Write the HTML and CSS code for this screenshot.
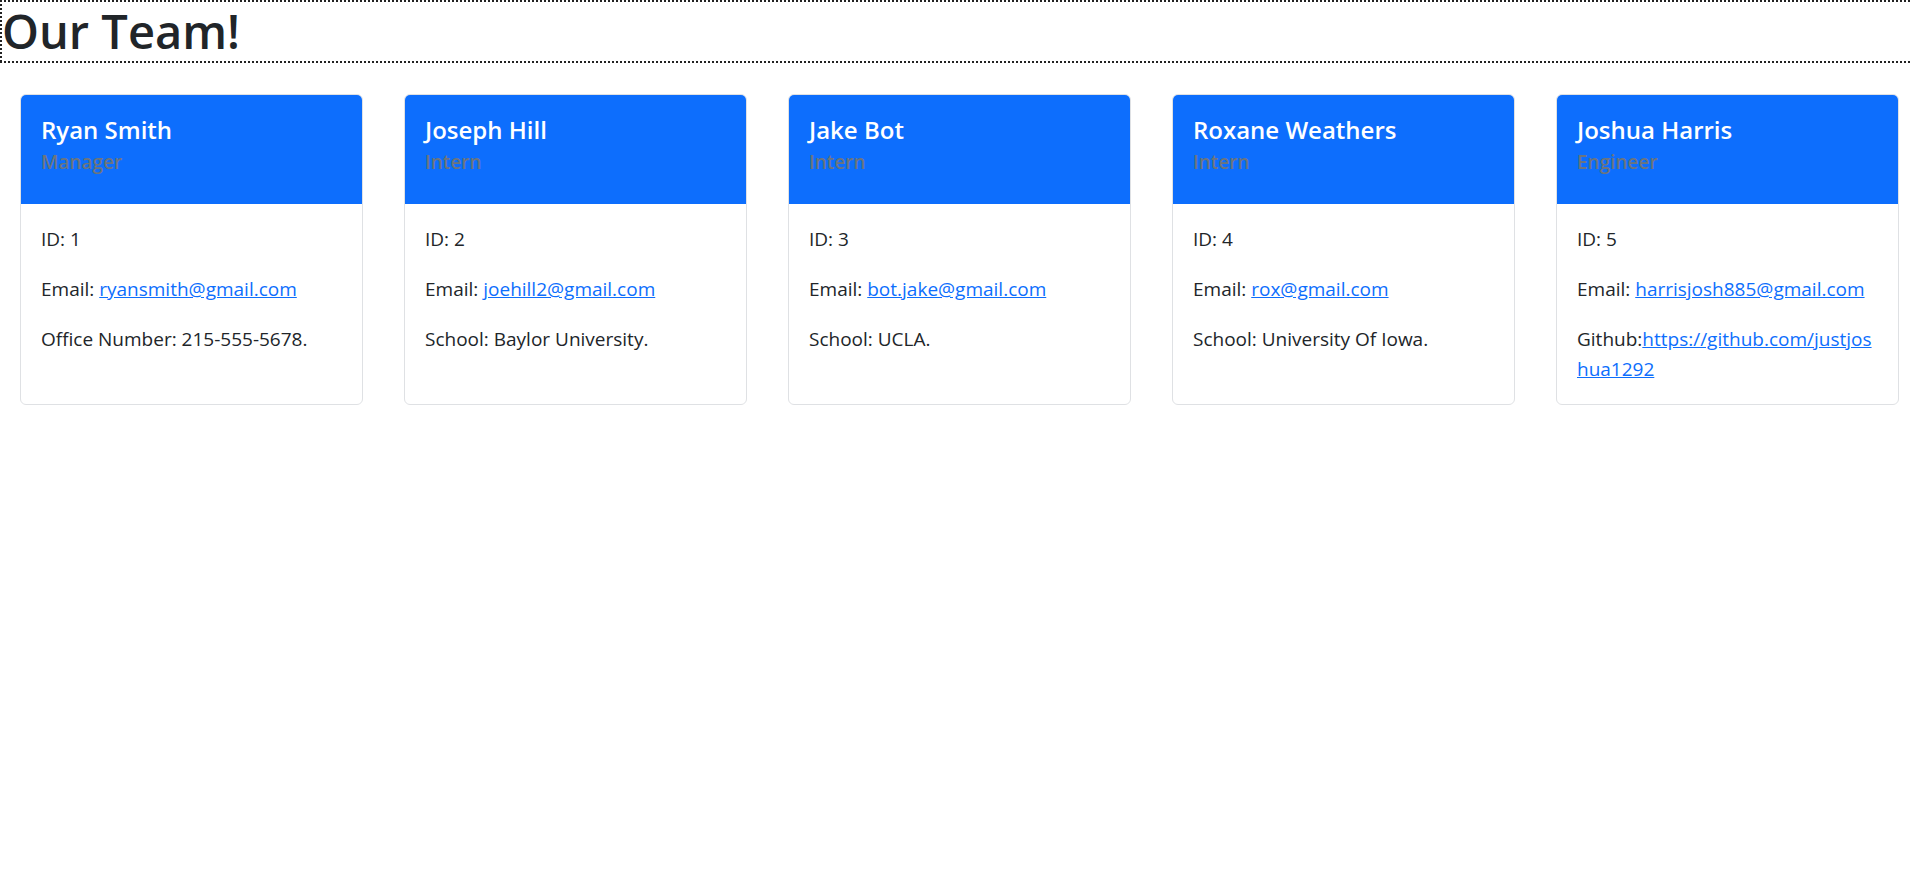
FILE: index.html
```html
<!DOCTYPE html>
<html lang="en">
<head>
<meta charset="utf-8">
<title>Our Team</title>
<link rel="stylesheet" href="styles.css">
</head>
<body>
<header class="banner">
  <h1 class="banner-title">Our Team!</h1>
</header>
<main class="team">
  <div class="card">
    <div class="card-head">
      <h5 class="card-title">Ryan Smith</h5>
      <h6 class="card-subtitle">Manager</h6>
    </div>
    <div class="card-body">
      <p class="card-text">ID: 1</p>
      <p class="card-text">Email: <a href="#">ryansmith@gmail.com</a></p>
      <p class="card-text">Office Number: 215-555-5678.</p>
    </div>
  </div>
  <div class="card">
    <div class="card-head">
      <h5 class="card-title">Joseph Hill</h5>
      <h6 class="card-subtitle">Intern</h6>
    </div>
    <div class="card-body">
      <p class="card-text">ID: 2</p>
      <p class="card-text">Email: <a href="#">joehill2@gmail.com</a></p>
      <p class="card-text">School: Baylor University.</p>
    </div>
  </div>
  <div class="card">
    <div class="card-head">
      <h5 class="card-title">Jake Bot</h5>
      <h6 class="card-subtitle">Intern</h6>
    </div>
    <div class="card-body">
      <p class="card-text">ID: 3</p>
      <p class="card-text">Email: <a href="#">bot.jake@gmail.com</a></p>
      <p class="card-text">School: UCLA.</p>
    </div>
  </div>
  <div class="card">
    <div class="card-head">
      <h5 class="card-title">Roxane Weathers</h5>
      <h6 class="card-subtitle">Intern</h6>
    </div>
    <div class="card-body">
      <p class="card-text">ID: 4</p>
      <p class="card-text">Email: <a href="#">rox@gmail.com</a></p>
      <p class="card-text">School: University Of Iowa.</p>
    </div>
  </div>
  <div class="card">
    <div class="card-head">
      <h5 class="card-title">Joshua Harris</h5>
      <h6 class="card-subtitle">Engineer</h6>
    </div>
    <div class="card-body">
      <p class="card-text">ID: 5</p>
      <p class="card-text">Email: <a href="#">harrisjosh885@gmail.com</a></p>
      <p class="card-text">Github:<a href="#">https://github.com/justjos<wbr>hua1292</a></p>
    </div>
  </div>
</main>
</body>
</html>
```

FILE: styles.css
```css
html, body {
  margin: 0;
  padding: 0;
  background: #ffffff;
}
body {
  font-family: "Open Sans", "Noto Sans", "Liberation Sans", sans-serif;
  font-size: 20px;
  line-height: 1.5;
  color: #212529;
}
.banner {
  height: 63px;
  box-sizing: border-box;
  padding: 2px 0 2px 2px;
  background-image:
    linear-gradient(to right, #222 50%, transparent 50%),
    linear-gradient(to right, #222 50%, transparent 50%),
    linear-gradient(to bottom, #222 50%, transparent 50%);
  background-size: 4px 2px, 4px 2px, 2px 4px;
  background-position: 0 0, 0 100%, 0 0;
  background-repeat: repeat-x, repeat-x, repeat-y;
}
.banner-title {
  margin: 0;
  padding-left: 0;
  font-size: 47px;
  font-weight: 600;
  line-height: 58px;
  color: #212529;
}
.team {
  display: flex;
  align-items: stretch;
  gap: 41px;
  padding: 31px 0 0 20px;
}
.card {
  width: 343px;
  flex: 0 0 343px;
  box-sizing: border-box;
  border: 1px solid #dfe1e4;
  border-radius: 6px;
  overflow: hidden;
  display: flex;
  flex-direction: column;
}
.card-head {
  background: #0d6efd;
  padding: 20px;
}
.card-title {
  margin: 0 0 10px;
  font-size: 24px;
  font-weight: 600;
  line-height: 30px;
  color: #ffffff;
}
.card-subtitle {
  margin: -5px 0 10px;
  font-size: 19px;
  font-weight: 600;
  line-height: 24px;
  color: #6c757d;
}
.card-body {
  padding: 20px;
  flex: 1 1 auto;
}
.card-text {
  margin: 0 0 20px;
  font-size: 19px;
  line-height: 30px;
}
.card-text:last-child {
  margin-bottom: 0;
}
.card-text a {
  color: #0d6efd;
  text-decoration: underline;
}
```
